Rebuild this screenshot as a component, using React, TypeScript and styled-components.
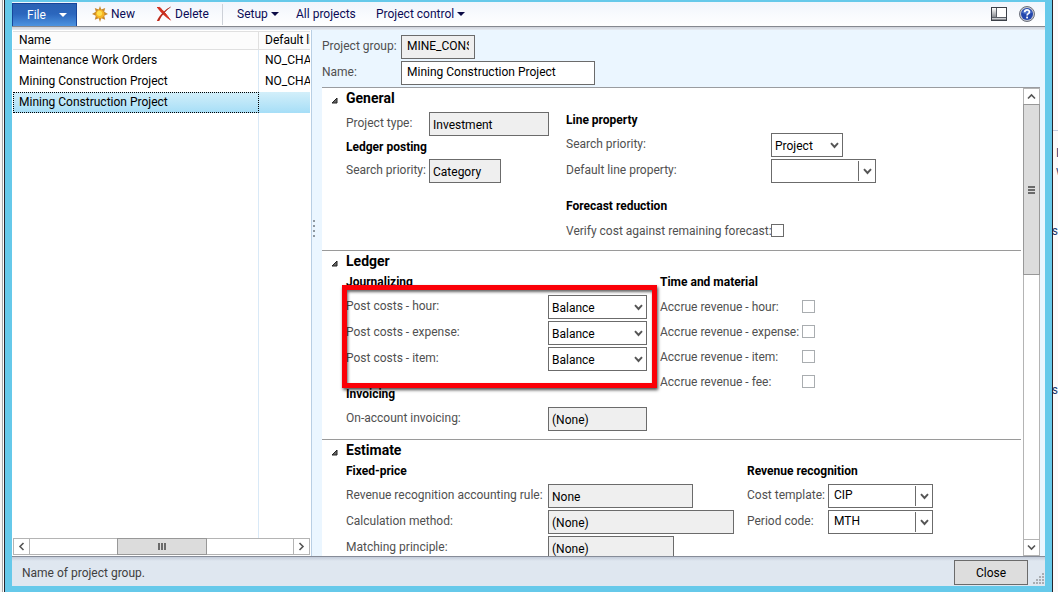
import React, { useId } from "react";
import styled, { createGlobalStyle, css } from "styled-components";

const FONT = 'Roboto, "Open Sans", sans-serif';

const GlobalStyle = createGlobalStyle`
  *, *::before, *::after { box-sizing: border-box; }
  html, body { margin: 0; padding: 0; }
  body { overflow: hidden; }
  body, button, input, select, table { font-family: ${FONT}; font-size: 12px; }
`;

/* ---------- window frame ---------- */

const Desktop = styled.div`
  display: flex;
  height: 100vh;
  background: #f0f0f0;
  line-height: 18px;
`;

const LeftEdge = styled.div`
  width: 4px;
  flex: none;
  background: #f4f4f4;
  border-right: 1px solid #fdfdfd;
  box-shadow: inset -1px 0 0 #a8a8a8;
`;

const RightEdge = styled.div`
  width: 5px;
  flex: none;
  display: flex;
  flex-direction: column;
  padding-top: 130px;
  overflow: hidden;
  background: #fcfafa;
  color: #1d3a6e;
  white-space: nowrap;
`;

const EdgeRule = styled.div`
  height: 1px;
  background: #c5cde0;
`;

const EdgeText = styled.span<{ $gap: number; $indent?: number }>`
  display: flex;
  margin-top: ${(p) => p.$gap}px;
  padding-left: ${(p) => p.$indent ?? 0}px;
  justify-content: ${(p) => (p.$indent ? "flex-start" : "flex-end")};
`;

const Frame = styled.div`
  flex: 1;
  min-width: 0;
  display: flex;
  padding: 2px 7px 6px;
  background: #66c9ea;
  border: solid #25252d;
  border-width: 0 1px;
`;

const Window = styled.main`
  flex: 1;
  min-width: 0;
  display: flex;
  flex-direction: column;
  background: #ebf6ff;
`;

/* ---------- toolbar ---------- */

const Toolbar = styled.header`
  flex: none;
  display: flex;
  align-items: center;
  height: 25px;
  padding-right: 10px;
  background: linear-gradient(#f1f5fc, #ffffff);
  border-bottom: 1px solid #85888f;
`;

const ToolbarShade = styled.div`
  flex: none;
  height: 3px;
  background: linear-gradient(#cfd2da, #e6ebf2);
`;

const ToolButton = styled.button<{ $width: number }>`
  display: flex;
  align-items: center;
  gap: 3px;
  flex: none;
  width: ${(p) => p.$width}px;
  height: 24px;
  padding: 0;
  border: 0;
  background: none;
  color: #0b0b56;
  white-space: nowrap;

  > svg { flex: none; }
`;

const FileButton = styled.button`
  display: flex;
  align-items: center;
  gap: 13px;
  flex: none;
  align-self: flex-end;
  width: 65px;
  height: 23px;
  margin-right: 15px;
  padding: 0 0 0 14px;
  border: 1px solid #17459a;
  border-bottom: 0;
  background: linear-gradient(#2a62b4, #2b66bd 45%, #4c93e0);
  color: #ffffff;
`;

const ToolSeparator = styled.div`
  flex: none;
  width: 1px;
  height: 21px;
  margin-right: 14px;
  background: #cdd1d8;
`;

const IconGroup = styled.div`
  display: flex;
  align-items: center;
  gap: 12px;
  margin-left: auto;
`;

const IconButton = styled.button`
  display: flex;
  padding: 0;
  border: 0;
  background: none;
`;

/* ---------- body ---------- */

const Body = styled.div`
  flex: 1;
  min-height: 0;
  display: flex;
`;

const ListPanel = styled.aside`
  flex: none;
  width: 300px;
  display: flex;
  flex-direction: column;
  padding: 1px 1px 1px;
  background: #ffffff;
  border-right: 1px solid #b9cfe4;
`;

const ListArea = styled.div`
  flex: 1;
  min-height: 0;
  display: flex;
  flex-direction: column;
  overflow: hidden;
`;

const Table = styled.table`
  width: 100%;
  table-layout: fixed;
  border-collapse: separate;
  border-spacing: 0;
  color: #000000;
`;

const HeadCell = styled.th<{ $width?: number }>`
  width: ${(p) => (p.$width ? `${p.$width}px` : "auto")};
  height: 19px;
  padding: 0 0 0 6px;
  overflow: hidden;
  white-space: nowrap;
  text-align: left;
  font-weight: 400;
  line-height: 17px;
  background: #fcfcfc;
  border: solid #e0e0e0;
  border-width: 1px 1px 1px 0;

  &:last-child { border-right: 0; }
`;

const Cell = styled.td`
  height: 21px;
  padding: 0 0 0 6px;
  overflow: hidden;
  white-space: nowrap;
  line-height: 19px;

  &:first-child { border-right: 1px solid #d9e9f7; }
`;

const Row = styled.tr<{ $selected?: boolean }>`
  ${(p) =>
    p.$selected &&
    css`
      background: linear-gradient(#d3effa, #a6def7);

      ${Cell}:first-child {
        padding-left: 5px;
        border: 1px dotted #000000;
      }
    `}
`;

const ColumnRule = styled.div`
  flex: 1;
  width: 246px;
  border-right: 1px solid #d9e9f7;
`;

const ScrollTrack = styled.div<{ $vertical?: boolean }>`
  flex: none;
  display: flex;
  flex-direction: ${(p) => (p.$vertical ? "column" : "row")};
  ${(p) => (p.$vertical ? "width: 17px;" : "height: 17px;")}
  background: #ffffff;
  border: 1px solid #b4b4b4;
`;

const ScrollArrow = styled.button<{ $vertical?: boolean }>`
  flex: none;
  display: flex;
  align-items: center;
  justify-content: center;
  width: ${(p) => (p.$vertical ? "auto" : "16px")};
  height: ${(p) => (p.$vertical ? "16px" : "auto")};
  padding: 0;
  border: 0;
  background: #ffffff;
  border-${(p) => (p.$vertical ? "bottom" : "right")}: 1px solid #b4b4b4;

  &:last-child {
    border-${(p) => (p.$vertical ? "bottom" : "right")}: 0;
    border-${(p) => (p.$vertical ? "top" : "left")}: 1px solid #b4b4b4;
  }
`;

const ScrollSpace = styled.div<{ $grow: number }>`
  flex: ${(p) => p.$grow} 1 0;
`;

const ScrollThumb = styled.div<{ $grow: number }>`
  flex: ${(p) => p.$grow} 1 0;
  display: flex;
  align-items: center;
  justify-content: center;
  margin: -1px;
  background: #dcdcdc;
  border: 1px solid #989898;
`;

const Splitter = styled.div`
  flex: none;
  display: flex;
  align-items: center;
  width: 10px;
  padding: 0 0 128px;
`;

const Detail = styled.section`
  flex: 1;
  min-width: 0;
  display: flex;
  flex-direction: column;
  padding-right: 5px;
`;

const HeaderFields = styled.div`
  flex: none;
  display: flex;
  flex-direction: column;
  gap: 2px;
  padding: 5px 0 2px;
`;

const Pane = styled.div`
  flex: 1;
  min-height: 0;
  display: flex;
  background: #ffffff;
  border-top: 1px solid #9a9ca0;
`;

const PaneContent = styled.div`
  flex: 1;
  min-width: 0;
  overflow: hidden;
`;

/* ---------- form sections ---------- */

const SectionBox = styled.section`
  margin-right: 2px;
  padding: 0 0 8px;
  border-bottom: 1px solid #9a9a9a;
`;

const SectionTitle = styled.h2`
  display: flex;
  align-items: center;
  height: 20px;
  margin: 0;
  padding: 0 0 0 9px;
  gap: 8px;
  font-size: 14px;
  font-weight: 700;
  color: #000000;

  > svg { margin-top: 4px; }
`;

const Columns = styled.div`
  display: flex;
  align-items: flex-start;
  padding-left: 24px;
`;

const Column = styled.div<{ $width?: number; $top?: number }>`
  position: relative;
  flex: none;
  width: ${(p) => (p.$width ? `${p.$width}px` : "auto")};
  display: flex;
  flex-direction: column;
  gap: 2px;
  padding-top: ${(p) => p.$top ?? 0}px;
`;

const GroupTitle = styled.h3<{ $spaced?: boolean; $compact?: boolean }>`
  height: ${(p) => (p.$compact ? 19 : 22)}px;
  margin: ${(p) => (p.$spaced ? 10 : 0)}px 0 0;
  font-size: 12px;
  font-weight: 700;
  line-height: ${(p) => (p.$compact ? 18 : 22)}px;
  white-space: nowrap;
  color: #000000;
`;

const FieldRow = styled.div<{ $label: number }>`
  display: grid;
  grid-template-columns: ${(p) => p.$label}px auto;
  justify-content: start;
  align-items: center;
  height: 24px;
`;

const Label = styled.label`
  white-space: nowrap;
  line-height: 22px;
  padding-bottom: 2px;
  color: #505050;
`;

const TextInput = styled.input<{ $width: number; $roomy?: boolean }>`
  width: ${(p) => p.$width}px;
  height: 24px;
  padding: ${(p) => (p.$roomy ? "0 5px 2px" : "2px 3px 0")};
  border: 1px solid #6b6b6b;
  border-radius: 0;
  outline: 0;
  background: #ffffff;
  color: #000000;

  &:read-only { background: #efefef; }
`;

const SelectBox = styled.span<{ $width: number }>`
  position: relative;
  display: flex;
  width: ${(p) => p.$width}px;
  height: 24px;

  > svg {
    position: absolute;
    top: 9px;
    right: 4px;
    pointer-events: none;
  }
`;

const NativeSelect = styled.select<{ $split?: boolean }>`
  appearance: none;
  width: 100%;
  height: 24px;
  padding: ${(p) => (p.$split ? "0 18px 2px 5px" : "2px 16px 0 3px")};
  border: 1px solid #6b6b6b;
  border-radius: 0;
  outline: 0;
  color: #000000;
  background: ${(p) =>
    p.$split
      ? "linear-gradient(#6b6b6b, #6b6b6b) right 16px center / 1px 20px no-repeat #ffffff"
      : "#ffffff"};
`;

const CheckBox = styled.input`
  appearance: none;
  width: 13px;
  height: 13px;
  margin: 0;
  border: 1px solid #6b6b6b;
  background: #ffffff;

  &:disabled { border-color: #a9adb0; }
`;

const CheckRow = styled(FieldRow)`
  height: 23px;

  ${Label} { padding-bottom: 0; }
`;

const Highlight = styled.div`
  position: absolute;
  top: 14px;
  left: -4px;
  right: 3px;
  height: 103px;
  border: 5px solid #fb0007;
  box-shadow: 1px 2px 3px rgba(0, 0, 0, 0.7), inset 1px 2px 3px rgba(0, 0, 0, 0.6);
  pointer-events: none;
`;

/* ---------- status bar ---------- */

const StatusBar = styled.footer`
  flex: none;
  display: flex;
  align-items: center;
  height: 30px;
  padding: 2px 1px 0 10px;
  background: linear-gradient(#c3cbd9, #dfe7f0 4px);
  border-top: 1px solid #868c98;
  color: #404040;
`;

const CloseButton = styled.button`
  width: 74px;
  height: 25px;
  margin-left: auto;
  padding: 0;
  border: 1px solid #6b6b6b;
  background: #dddddd;
  color: #000000;
`;

const Grip = styled.span`
  display: flex;
  align-self: flex-end;
  margin: 0 0 2px 5px;
`;

/* ---------- drawings ---------- */

const Caret = ({ color = "#0b0b46" }: { color?: string }) => (
  <svg width="8" height="4" viewBox="0 0 8 4" aria-hidden="true">
    <path d="M0 0h8L4 4z" fill={color} />
  </svg>
);

const Chevron = () => (
  <svg width="9" height="7" viewBox="0 0 9 7" aria-hidden="true">
    <path d="M1 1.2 4.5 5 8 1.2" fill="none" stroke="#555" strokeWidth="1.9" />
  </svg>
);

const ARROWS = {
  up: "M1 6.5 4.5 3 8 6.5",
  down: "M1 2.5 4.5 6 8 2.5",
  left: "M6.5 1 3 4.5 6.5 8",
  right: "M2.5 1 6 4.5 2.5 8",
};

const Arrow = ({ dir }: { dir: keyof typeof ARROWS }) => (
  <svg width="9" height="9" viewBox="0 0 9 9" aria-hidden="true">
    <path d={ARROWS[dir]} fill="none" stroke="#555" strokeWidth="1.6" />
  </svg>
);

const SunIcon = () => (
  <svg width="16" height="16" viewBox="0 0 16 16" aria-hidden="true">
    <path
      d="M8 0l1.3 3.4L13.2 2l-1 3.8L16 8l-3.800 1.700 1 4-3.900-1.500L8 16l-1.300-3.800L2.800 13.700l1-4L0 8l3.800-2.200L2.800 2l3.900 1.400z"
      fill="#c98a2b"
    />
    <circle cx="8" cy="8" r="4.300" fill="#f7b524" />
    <circle cx="7.500" cy="7.300" r="2.600" fill="#ffdf4d" />
  </svg>
);

const DeleteIcon = () => (
  <svg width="16" height="16" viewBox="0 0 16 16" aria-hidden="true">
    <path d="M1 1.500h2.800C6.500 4 11 9 14.500 14.300 10 11.500 5 7 1 1.500z" fill="#d4301f" />
    <path d="M15 .8C10.500 4 5.500 9.500 3.300 15H.8C3.500 9 9.500 3 15 .8z" fill="#d4301f" />
    <path d="M1 1.500h2.800C6.500 4 11 9 14.500 14.300" fill="none" stroke="#d4301f" />
    <path d="M14.600 1C9.500 4.200 4.500 9.500 2 14.800" fill="none" stroke="#8f2a1f" strokeWidth=".7" />
  </svg>
);

const LayoutIcon = () => (
  <svg width="16" height="14" viewBox="0 0 16 14" aria-hidden="true">
    <defs>
      <linearGradient id="layoutSide" x1="0" x2="0" y1="0" y2="1">
        <stop offset="0" stopColor="#fff" />
        <stop offset="1" stopColor="#8a8d92" />
      </linearGradient>
    </defs>
    <rect x=".5" y=".5" width="15" height="13" fill="#8c8f94" stroke="#3c4048" />
    <rect x="1" y="1" width="4" height="9" fill="url(#layoutSide)" />
    <rect x="5" y="1" width="10" height="9" fill="#fff" />
    <path d="M5.500 1v9M1 10.500h14" stroke="#5a5e66" />
    <path d="M1 11.500h14" stroke="#c9ccd0" />
  </svg>
);

const HelpIcon = () => (
  <svg width="16" height="16" viewBox="0 0 16 16" aria-hidden="true">
    <circle cx="8" cy="8" r="7.500" fill="#c3c7d2" stroke="#6d717c" />
    <circle cx="8" cy="8" r="6" fill="#2447ad" />
    <path d="M3 6.500a5.200 4.200 0 0 1 10 0C10 8.500 6 8.500 3 6.500z" fill="#6f93e0" opacity=".55" />
    <path
      d="M5.700 6.200c0-3.200 4.700-3.100 4.700-.2 0 1.700-2.300 1.600-2.300 3.500"
      fill="none"
      stroke="#fff"
      strokeWidth="1.700"
    />
    <rect x="7.200" y="10.600" width="1.800" height="1.800" fill="#fff" />
  </svg>
);

const ExpandIcon = () => (
  <svg width="7" height="7" viewBox="0 0 7 7" aria-hidden="true">
    <path d="M6 1v5H1z" fill="#666" stroke="#222" />
  </svg>
);

const ThumbGrip = ({ vertical }: { vertical?: boolean }) => (
  <svg width="8" height="8" viewBox="0 0 8 8" aria-hidden="true">
    <path
      d={vertical ? "M0 1h7M0 4h7M0 7h7" : "M1 0v7M4 0v7M7 0v7"}
      stroke="#6a6a6a"
      strokeWidth="2"
    />
  </svg>
);

const SplitterDots = () => (
  <svg width="4" height="18" viewBox="0 0 4 18" aria-hidden="true">
    <path d="M2 0v18" stroke="#8e979f" strokeWidth="2" strokeDasharray="2 3" />
  </svg>
);

const GripDots = () => (
  <svg width="11" height="11" viewBox="0 0 11 11" aria-hidden="true">
    {[[9, 0], [6, 3], [9, 3], [3, 6], [6, 6], [9, 6], [0, 9], [3, 9], [6, 9], [9, 9]].map(
      ([x, y]) => (
        <rect key={`${x}-${y}`} x={x} y={y} width="2" height="2" fill="#a9adb2" />
      ),
    )}
  </svg>
);

/* ---------- controls ---------- */

type FieldProps = { label: string; labelWidth: number; width: number; value: string };

const TextField = ({
  label,
  labelWidth,
  width,
  value,
  readOnly,
  roomy,
}: FieldProps & { readOnly?: boolean; roomy?: boolean }) => {
  const id = useId();
  return (
    <FieldRow $label={labelWidth}>
      <Label htmlFor={id}>{label}</Label>
      <TextInput id={id} $width={width} $roomy={roomy} defaultValue={value} readOnly={readOnly} />
    </FieldRow>
  );
};

const SelectField = ({ label, labelWidth, width, value, split }: FieldProps & { split?: boolean }) => {
  const id = useId();
  return (
    <FieldRow $label={labelWidth}>
      <Label htmlFor={id}>{label}</Label>
      <SelectBox $width={width}>
        <NativeSelect id={id} $split={split} defaultValue={value}>
          <option>{value}</option>
        </NativeSelect>
        <Chevron />
      </SelectBox>
    </FieldRow>
  );
};

const CheckField = ({ label, labelWidth, disabled }: { label: string; labelWidth: number; disabled?: boolean }) => {
  const id = useId();
  return (
    <CheckRow $label={labelWidth}>
      <Label htmlFor={id}>{label}</Label>
      <CheckBox id={id} type="checkbox" disabled={disabled} />
    </CheckRow>
  );
};

const Section = ({ title, children }: { title: string; children: React.ReactNode }) => (
  <SectionBox>
    <SectionTitle>
      <ExpandIcon />
      {title}
    </SectionTitle>
    <Columns>{children}</Columns>
  </SectionBox>
);

export default function App() {
  return (
    <>
      <GlobalStyle />
      <Desktop>
        <LeftEdge />
        <Frame>
          <Window>
            <Toolbar>
              <FileButton>
                File <Caret color="#ffffff" />
              </FileButton>
              <ToolButton $width={64}>
                <SunIcon /> New
              </ToolButton>
              <ToolButton $width={66}>
                <DeleteIcon /> Delete
              </ToolButton>
              <ToolSeparator />
              <ToolButton $width={59}>
                Setup <Caret />
              </ToolButton>
              <ToolButton $width={80}>All projects</ToolButton>
              <ToolButton $width={90}>
                Project control <Caret />
              </ToolButton>
              <IconGroup>
                <IconButton aria-label="View">
                  <LayoutIcon />
                </IconButton>
                <IconButton aria-label="Help">
                  <HelpIcon />
                </IconButton>
              </IconGroup>
            </Toolbar>
            <ToolbarShade />
            <Body>
              <ListPanel>
                <ListArea>
                  <Table>
                    <thead>
                      <tr>
                        <HeadCell $width={246}>Name</HeadCell>
                        <HeadCell>Default line property</HeadCell>
                      </tr>
                    </thead>
                    <tbody>
                      <Row>
                        <Cell>Maintenance Work Orders</Cell>
                        <Cell>NO_CHARGE</Cell>
                      </Row>
                      <Row>
                        <Cell>Mining Construction Project</Cell>
                        <Cell>NO_CHARGE</Cell>
                      </Row>
                      <Row $selected>
                        <Cell>Mining Construction Project</Cell>
                        <Cell />
                      </Row>
                    </tbody>
                  </Table>
                  <ColumnRule />
                </ListArea>
                <ScrollTrack>
                  <ScrollArrow aria-label="Scroll left">
                    <Arrow dir="left" />
                  </ScrollArrow>
                  <ScrollSpace $grow={88} />
                  <ScrollThumb $grow={87}>
                    <ThumbGrip />
                  </ScrollThumb>
                  <ScrollSpace $grow={87} />
                  <ScrollArrow aria-label="Scroll right">
                    <Arrow dir="right" />
                  </ScrollArrow>
                </ScrollTrack>
              </ListPanel>
              <Splitter>
                <SplitterDots />
              </Splitter>
              <Detail>
                <HeaderFields>
                  <TextField label="Project group:" labelWidth={79} width={74} value="MINE_CONST" readOnly roomy />
                  <TextField label="Name:" labelWidth={79} width={194} value="Mining Construction Project" roomy />
                </HeaderFields>
                <Pane>
                  <PaneContent>
                    <Section title="General">
                      <Column $width={220} $top={4}>
                        <TextField label="Project type:" labelWidth={83} width={120} value="Investment" readOnly />
                        <GroupTitle $compact>Ledger posting</GroupTitle>
                        <TextField label="Search priority:" labelWidth={83} width={72} value="Category" readOnly />
                      </Column>
                      <Column $top={1}>
                        <GroupTitle>Line property</GroupTitle>
                        <SelectField label="Search priority:" labelWidth={205} width={72} value="Project" />
                        <SelectField label="Default line property:" labelWidth={205} width={105} value="" split />
                        <GroupTitle $spaced>Forecast reduction</GroupTitle>
                        <CheckField label="Verify cost against remaining forecast:" labelWidth={205} />
                      </Column>
                    </Section>
                    <Section title="Ledger">
                      <Column $width={314}>
                        <GroupTitle>Journalizing</GroupTitle>
                        <SelectField label="Post costs - hour:" labelWidth={202} width={99} value="Balance" />
                        <SelectField label="Post costs - expense:" labelWidth={202} width={99} value="Balance" />
                        <SelectField label="Post costs - item:" labelWidth={202} width={99} value="Balance" />
                        <GroupTitle $spaced>Invoicing</GroupTitle>
                        <TextField label="On-account invoicing:" labelWidth={202} width={99} value="(None)" readOnly />
                        <Highlight />
                      </Column>
                      <Column>
                        <GroupTitle>Time and material</GroupTitle>
                        <CheckField label="Accrue revenue - hour:" labelWidth={142} disabled />
                        <CheckField label="Accrue revenue - expense:" labelWidth={142} disabled />
                        <CheckField label="Accrue revenue - item:" labelWidth={142} disabled />
                        <CheckField label="Accrue revenue - fee:" labelWidth={142} disabled />
                      </Column>
                    </Section>
                    <Section title="Estimate">
                      <Column $width={401}>
                        <GroupTitle>Fixed-price</GroupTitle>
                        <TextField label="Revenue recognition accounting rule:" labelWidth={202} width={145} value="None" readOnly />
                        <TextField label="Calculation method:" labelWidth={202} width={186} value="(None)" readOnly />
                        <TextField label="Matching principle:" labelWidth={202} width={126} value="(None)" readOnly />
                      </Column>
                      <Column>
                        <GroupTitle>Revenue recognition</GroupTitle>
                        <SelectField label="Cost template:" labelWidth={81} width={105} value="CIP" split />
                        <SelectField label="Period code:" labelWidth={81} width={105} value="MTH" split />
                      </Column>
                    </Section>
                  </PaneContent>
                  <ScrollTrack $vertical>
                    <ScrollArrow $vertical aria-label="Scroll up">
                      <Arrow dir="up" />
                    </ScrollArrow>
                    <ScrollThumb $grow={169}>
                      <ThumbGrip vertical />
                    </ScrollThumb>
                    <ScrollSpace $grow={265} />
                    <ScrollArrow $vertical aria-label="Scroll down">
                      <Arrow dir="down" />
                    </ScrollArrow>
                  </ScrollTrack>
                </Pane>
              </Detail>
            </Body>
            <StatusBar>
              Name of project group.
              <CloseButton>Close</CloseButton>
              <Grip>
                <GripDots />
              </Grip>
            </StatusBar>
          </Window>
        </Frame>
        <RightEdge aria-hidden="true">
          <EdgeRule />
          <EdgeText $gap={13} $indent={3}>I</EdgeText>
          <EdgeText $gap={0} $indent={3}>w</EdgeText>
          <EdgeText $gap={42}>es</EdgeText>
          <EdgeText $gap={141}>s</EdgeText>
        </RightEdge>
      </Desktop>
    </>
  );
}
